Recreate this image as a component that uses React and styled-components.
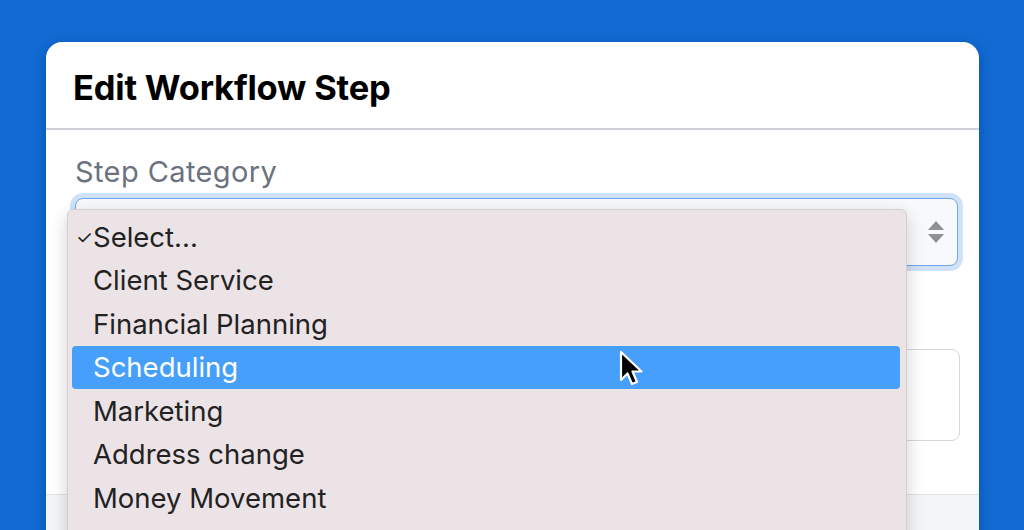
import React from "react";
import styled, { createGlobalStyle } from "styled-components";

const GlobalStyle = createGlobalStyle`
  html, body {
    margin: 0;
    padding: 0;
  }
  body {
    font-family: Inter, "Liberation Sans", Arial, sans-serif;
    -webkit-font-smoothing: antialiased;
  }
`;

const options = [
  "Select...",
  "Client Service",
  "Financial Planning",
  "Scheduling",
  "Marketing",
  "Address change",
  "Money Movement",
  "New Account Opening",
];

const App = () => {
  return (
    <Page>
      <GlobalStyle />
      <Card>
        <Header>
          <Title>Edit Workflow Step</Title>
        </Header>
        <Body>
          <Label>Step Category</Label>
          <SelectBox>
            <Arrows>
              <svg width="18" height="24" viewBox="0 0 18 24">
                <path d="M9 1 L17 10 L1 10 Z" fill="#8d9098" />
                <path d="M9 23 L17 14 L1 14 Z" fill="#8d9098" />
              </svg>
            </Arrows>
          </SelectBox>
          <TextArea />
        </Body>
        <Footer />
        <Menu>
          {options.map((opt, i) => (
            <Option key={opt} $active={opt === "Scheduling"}>
              {i === 0 && <Check>✓</Check>}
              {opt}
            </Option>
          ))}
        </Menu>
        <Cursor>
          <svg width="30" height="40" viewBox="0 0 30 40">
            <path
              d="M2 2 L2 30 L8.5 23.5 L13 34 L18 32 L13.5 21.5 L22.5 21.5 Z"
              fill="#000"
              stroke="#fff"
              strokeWidth="2.2"
              strokeLinejoin="round"
            />
          </svg>
        </Cursor>
      </Card>
    </Page>
  );
};

export default App;

const Page = styled.div`
  height: 530px;
  overflow: hidden;
  box-sizing: border-box;
  padding: 42px 45px 0 46px;
  background: #116bd3;
`;

const Card = styled.div`
  position: relative;
  background: #fff;
  border-radius: 16px 16px 0 0;
  height: 520px;
  box-shadow: 0 4px 14px rgba(0, 30, 90, 0.35);
  display: flex;
  flex-direction: column;
`;

const Header = styled.div`
  height: 86px;
  display: flex;
  align-items: center;
  padding: 0 27px;
  border-bottom: 2px solid #cdd1d7;
`;

const Title = styled.h1`
  margin: 0;
  font-size: 34.5px;
  font-weight: 700;
  color: #000;
  letter-spacing: -0.2px;
  padding-top: 4px;
`;

const Body = styled.div`
  padding: 22px 21px 0 29px;
  height: 364px;
  box-sizing: border-box;
`;

const Label = styled.div`
  font-size: 29px;
  line-height: 40px;
  color: #6b7280;
  letter-spacing: 0.4px;
  margin-bottom: 6px;
`;

const SelectBox = styled.div`
  height: 68px;
  box-sizing: border-box;
  border: 1px solid #6fa6ea;
  border-radius: 8px;
  background: #f8f9fb;
  box-shadow: 0 0 0 5px #cfe2f7;
  display: flex;
  align-items: center;
  justify-content: flex-end;
  padding-right: 12px;
  margin-bottom: 83px;
`;

const Arrows = styled.div`
  display: flex;
`;

const TextArea = styled.div`
  height: 92px;
  box-sizing: border-box;
  border: 1px solid #d3d6db;
  border-radius: 8px;
  background: #fff;
  margin-right: -2px;
`;

const Footer = styled.div`
  flex: 1;
  background: #f4f5f7;
  border-top: 1px solid #dfe2e6;
`;

const Menu = styled.div`
  position: absolute;
  left: 21px;
  top: 167px;
  width: 840px;
  height: 400px;
  box-sizing: border-box;
  padding: 5px 6px 0 4px;
  background: #ebe3e6;
  border: 1px solid #d5cfd2;
  border-radius: 6px;
  box-shadow: 0 6px 18px rgba(0, 0, 0, 0.18);
`;

const Option = styled.div`
  position: relative;
  height: 43.5px;
  display: flex;
  align-items: center;
  padding-left: 21px;
  font-size: 27.5px;
  color: ${(p) => (p.$active ? "#fff" : "#222")};
  background: ${(p) => (p.$active ? "#469ffb" : "transparent")};
  border-radius: 4px;
`;

const Check = styled.span`
  position: absolute;
  left: 4px;
  font-size: 19px;
  top: 11px;
  color: #222;
`;

const Cursor = styled.div`
  position: absolute;
  left: 573px;
  top: 308px;
`;
